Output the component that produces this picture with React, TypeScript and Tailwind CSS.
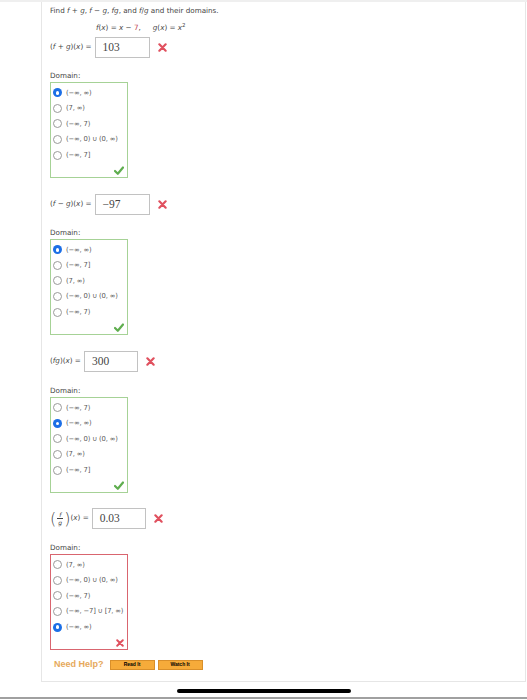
import React from 'react';

type Opt = { label: React.ReactNode; selected?: boolean };

function Radio({ selected }: { selected?: boolean }) {
  if (selected) {
    return (
      <span className="w-[9px] h-[9px] rounded-full bg-[#1c6fe6] flex items-center justify-center shrink-0">
        <span className="w-[3.5px] h-[3.5px] rounded-full bg-white" />
      </span>
    );
  }
  return <span className="w-[9px] h-[9px] rounded-full border border-[#9a9a9a] bg-white shrink-0" />;
}

function Check() {
  return (
    <svg width="10" height="9" viewBox="0 0 10 9">
      <path d="M1 5 L3.8 7.8 L9 1.5" fill="none" stroke="#5fae4f" strokeWidth="2.2" strokeLinecap="round" strokeLinejoin="round" />
    </svg>
  );
}

function Cross({ size = 9 }: { size?: number }) {
  return (
    <svg width={size} height={size} viewBox="0 0 10 10">
      <path d="M1.5 1.5 L8.5 8.5 M8.5 1.5 L1.5 8.5" fill="none" stroke="#e0505e" strokeWidth="2.4" strokeLinecap="round" />
    </svg>
  );
}

function Domain({ opts, ok }: { opts: Opt[]; ok: boolean }) {
  return (
    <div>
      <div className="h-[10px] leading-[10px] text-[7.2px] text-[#444]">Domain:</div>
      <div
        className={
          'mt-[1px] w-[78px] h-[96px] border pl-[2px] pt-[2px] flex flex-col ' +
          (ok ? 'border-[#a6d296]' : 'border-[#d9656f]')
        }
      >
        {opts.map((o, i) => (
          <div key={i} className="h-[15.6px] flex items-center gap-[4px]">
            <Radio selected={o.selected} />
            <span className="text-[6.8px] tracking-[-0.15px] text-[#555] whitespace-nowrap">{o.label}</span>
          </div>
        ))}
        <div className="flex-1 flex items-center justify-end pr-[3px] pt-[2px]">
          {ok ? <Check /> : <Cross size={8} />}
        </div>
      </div>
    </div>
  );
}

function Answer({ label, value, width = 55 }: { label: React.ReactNode; value: string; width?: number }) {
  return (
    <div className="flex items-center h-[21px]">
      <span className="text-[7.2px] text-[#444] whitespace-nowrap">{label}</span>
      <div
        className="ml-[3px] h-[21px] border border-[#c2c2c2] flex items-center pl-[7px] text-[11.5px] text-[#444] font-['Liberation_Serif',serif]"
        style={{ width }}
      >
        {value}
      </div>
      <span className="ml-[8px] flex items-center">
        <Cross />
      </span>
    </div>
  );
}

const I = ({ children }: { children: React.ReactNode }) => <i>{children}</i>;

export default function App() {
  return (
    <div className="w-[527px] h-[700px] bg-white relative overflow-hidden font-['DejaVu_Sans',sans-serif]">
      <div className="h-[2px] bg-[#efefef]" />
      <div className="ml-[41px] mr-[1px] h-[680px] border-l border-r border-b border-[#e6e6e6] pl-[8px]">
        <div className="pt-[4px] h-[14px] leading-[10px] text-[7.2px] text-[#444]">
          Find <I>f</I> + <I>g</I>, <I>f</I> − <I>g</I>, <I>fg</I>, and <I>f</I>/<I>g</I> and their domains.
        </div>
        <div className="mt-[7px] pl-[46px] h-[10px] leading-[10px] text-[7.2px] text-[#444] whitespace-nowrap">
          <I>f</I>(<I>x</I>) = <I>x</I> − <span className="text-[#c0424f]">7</span>,
          <span className="ml-[12px]">
            <I>g</I>(<I>x</I>) = <I>x</I>
            <sup className="text-[5.5px]">2</sup>
          </span>
        </div>

        <div className="mt-[4px]">
          <Answer label={<>(<I>f</I> + <I>g</I>)(<I>x</I>) =</>} value="103" />
        </div>
        <div className="mt-[13px]">
          <Domain
            ok
            opts={[
              { label: '(−∞, ∞)', selected: true },
              { label: '(7, ∞)' },
              { label: '(−∞, 7)' },
              { label: '(−∞, 0) ∪ (0, ∞)' },
              { label: '(−∞, 7]' },
            ]}
          />
        </div>

        <div className="mt-[16px]">
          <Answer label={<>(<I>f</I> − <I>g</I>)(<I>x</I>) =</>} value="−97" />
        </div>
        <div className="mt-[13px]">
          <Domain
            ok
            opts={[
              { label: '(−∞, ∞)', selected: true },
              { label: '(−∞, 7]' },
              { label: '(7, ∞)' },
              { label: '(−∞, 0) ∪ (0, ∞)' },
              { label: '(−∞, 7)' },
            ]}
          />
        </div>

        <div className="mt-[16px]">
          <Answer label={<>(<I>fg</I>)(<I>x</I>) =</>} value="300" width={54} />
        </div>
        <div className="mt-[14px]">
          <Domain
            ok
            opts={[
              { label: '(−∞, 7)' },
              { label: '(−∞, ∞)', selected: true },
              { label: '(−∞, 0) ∪ (0, ∞)' },
              { label: '(7, ∞)' },
              { label: '(−∞, 7]' },
            ]}
          />
        </div>

        <div className="mt-[15px]">
          <Answer
            width={54}
            label={
              <span className="inline-flex items-center h-[21px]">
                <span className="text-[16px] leading-none font-light">(</span>
                <span className="inline-flex flex-col items-center text-[6px] leading-[7px] px-[1px]">
                  <I>f</I>
                  <span className="w-[6px] h-[0.5px] bg-[#444]" />
                  <I>g</I>
                </span>
                <span className="text-[16px] leading-none font-light">)</span>
                <span>
                  (<I>x</I>) =
                </span>
              </span>
            }
            value="0.03"
          />
        </div>
        <div className="mt-[14px]">
          <Domain
            ok={false}
            opts={[
              { label: '(7, ∞)' },
              { label: '(−∞, 0) ∪ (0, ∞)' },
              { label: '(−∞, 7)' },
              { label: '(−∞, −7] ∪ [7, ∞)' },
              { label: '(−∞, ∞)', selected: true },
            ]}
          />
        </div>

        <div className="mt-[8px] flex items-center pl-[4px]">
          <span className="text-[9px] font-bold text-[#e6a95c] font-['Liberation_Sans',sans-serif]">Need Help?</span>
          <span className="ml-[6px] w-[45px] h-[10px] bg-[#f6ab3a] border border-[#d98f2a] flex items-center justify-center text-[5px] font-bold text-black font-['Liberation_Sans',sans-serif]">
            Read It
          </span>
          <span className="ml-[3px] w-[45px] h-[10px] bg-[#f6ab3a] border border-[#d98f2a] flex items-center justify-center text-[5px] font-bold text-black font-['Liberation_Sans',sans-serif]">
            Watch It
          </span>
        </div>
      </div>
      <div className="mt-[7px] flex justify-center">
        <div className="w-[174px] h-[4px] rounded-full bg-black" />
      </div>
      <div className="mt-[4px] h-[2px] bg-[#a0a0a0]" />
    </div>
  );
}
